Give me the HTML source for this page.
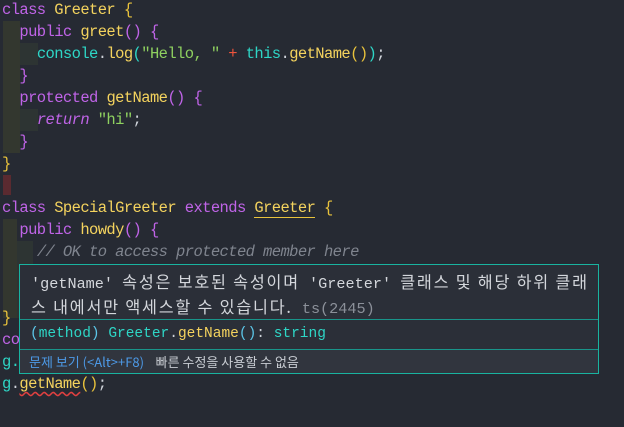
<!DOCTYPE html>
<html><head><meta charset="utf-8"><style>
*{margin:0;padding:0;box-sizing:border-box}
body{width:624px;height:427px;background:#262a33;overflow:hidden;position:relative;font-family:"Liberation Mono","Noto Sans CJK KR",monospace;font-size:15.5px;letter-spacing:-0.6px;color:#cfd3da}
.l{position:absolute;left:2px;height:22px;line-height:22px;white-space:pre}
.k{color:#c064e8}.c{color:#f4d35e}.b{color:#e8c23c}.p{color:#c064e8}.t{color:#2ed6c6}.s{color:#8fd160}.o{color:#f0543c}.m{color:#7f848e;font-style:italic}.f{color:#f4d35e}
.g{position:absolute}
.tip{position:absolute;left:19px;top:264px;width:580px;height:110px;background:#2b2f38;border:1px solid #19b3a0;letter-spacing:0}
.tip .msg{position:absolute;left:11px;top:5px;white-space:pre;font-family:"Liberation Mono","Noto Sans CJK KR",monospace;font-size:15.2px;line-height:22px;color:#d4d7dc}
.h{font-family:"Noto Sans CJK KR",sans-serif;font-size:16.2px;letter-spacing:1.8px}
.tip .div1{position:absolute;left:0;right:0;top:54px;border-top:1px solid #19958a}
.tip .sig{position:absolute;left:10px;top:58px;line-height:22px;font-size:14.5px;white-space:pre}
.tip .foot{position:absolute;left:0;right:0;top:84px;bottom:0;background:#31353e;border-top:1px solid #19958a;font-family:"Noto Sans CJK KR",sans-serif;font-size:13px;line-height:24px;padding-left:9px}
</style></head><body>
<div class="g" style="left:3px;top:21px;width:17px;height:132px;background:#33372f"></div>
<div class="g" style="left:20px;top:43px;width:18px;height:22px;background:#2d3433"></div>
<div class="g" style="left:20px;top:109px;width:18px;height:22px;background:#2d3433"></div>
<div class="g" style="left:3px;top:175px;width:8px;height:20px;background:#5a2a30"></div>
<div class="g" style="left:3px;top:219px;width:14px;height:99px;background:#33372f"></div>
<div class="g" style="left:17px;top:241px;width:16px;height:77px;background:#2d3433"></div>

<div class="l" style="top:-1px"><span class="k">class</span> <span class="c">Greeter</span> <span class="b">{</span></div>
<div class="l" style="top:21px">  <span class="k">public</span> <span class="f">greet</span><span class="p">()</span> <span class="p">{</span></div>
<div class="l" style="top:43px">    <span class="t">console</span>.<span class="f">log</span><span class="t">(</span><span class="s">"Hello, "</span> <span class="o">+</span> <span class="t">this</span>.<span class="f">getName</span><span class="b">()</span><span class="t">)</span>;</div>
<div class="l" style="top:65px">  <span class="p">}</span></div>
<div class="l" style="top:87px">  <span class="k">protected</span> <span class="f">getName</span><span class="p">()</span> <span class="p">{</span></div>
<div class="l" style="top:109px">    <span class="k" style="font-style:italic">return</span> <span class="s">"hi"</span>;</div>
<div class="l" style="top:131px">  <span class="p">}</span></div>
<div class="l" style="top:153px"><span class="b">}</span></div>
<div class="l" style="top:197px"><span class="k">class</span> <span class="c">SpecialGreeter</span> <span class="k">extends</span> <span class="c" style="border-bottom:1px solid #e8c23c">Greeter</span> <span class="b">{</span></div>
<div class="l" style="top:219px">  <span class="k">public</span> <span class="f">howdy</span><span class="p">()</span> <span class="p">{</span></div>
<div class="l" style="top:241px">    <span class="m">// OK to access protected member here</span></div>
<div class="l" style="top:307px"><span class="b">}</span></div>
<div class="l" style="top:329px"><span class="k">co</span></div>
<div class="l" style="top:351px"><span class="t">g.</span></div>
<div class="l" style="top:373px"><span class="t">g</span>.<span class="f" style="text-decoration:underline wavy #e04040;text-underline-offset:3px">getName</span><span class="b">()</span>;</div>

<div class="tip">
<div class="msg">'getName' <span class="h">속성은 보호된 속성이며</span> 'Greeter' <span class="h">클래스 및 해당 하위 클래</span>
<span class="h">스 내에서만 액세스할 수 있습니다.</span> <span style="color:#8b9099">ts(2445)</span></div>
<div class="div1"></div>
<div class="sig"><span style="color:#5cc6e8">(</span><span class="t">method</span><span style="color:#5cc6e8">)</span> <span class="t">Greeter</span>.<span class="f">getName</span><span style="color:#5cc6e8">()</span>: <span class="t">string</span></div>
<div class="foot"><span style="color:#4d9ae8">문제 보기 (&lt;Alt&gt;+F8)</span>&nbsp;&nbsp;&nbsp;&nbsp;<span style="color:#c8ccd2">빠른 수정을 사용할 수 없음</span></div>
</div>
</body></html>
